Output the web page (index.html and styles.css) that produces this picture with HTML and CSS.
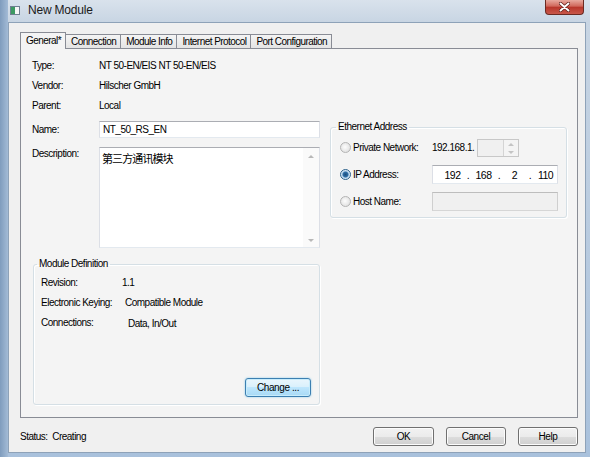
FILE: index.html
```html
<!DOCTYPE html>
<html lang="en">
<head>
    <meta charset="UTF-8">
    <title>New Module</title>
    <link rel="stylesheet" href="styles.css">
</head>
<body>
    <div class="window">
        <div class="titlebar">
            <span class="app-icon"></span>
            <span class="title">New Module</span>
            <button class="close-btn" aria-label="Close">
                <svg width="11" height="10" viewBox="0 0 11 10">
                    <path d="M1.5 1.5 L9.5 8.5 M9.5 1.5 L1.5 8.5" stroke="#5a1a14" stroke-width="3.4" stroke-linecap="round"/>
                    <path d="M1.5 1.5 L9.5 8.5 M9.5 1.5 L1.5 8.5" stroke="#fff" stroke-width="2" stroke-linecap="round"/>
                </svg>
            </button>
        </div>

        <div class="client">
            <div class="tabs">
                <div class="tab active">General*</div>
                <div class="tab">Connection</div>
                <div class="tab">Module Info</div>
                <div class="tab">Internet Protocol</div>
                <div class="tab">Port Configuration</div>
            </div>

            <div class="panel">
                <div class="panel-top">
                    <div class="left-col">
                        <div class="info-row"><span>Type:</span><span>NT 50-EN/EIS NT 50-EN/EIS</span></div>
                        <div class="info-row"><span>Vendor:</span><span>Hilscher GmbH</span></div>
                        <div class="info-row"><span>Parent:</span><span>Local</span></div>

                        <div class="info-row name-row">
                            <label>Name:</label>
                            <div class="textbox">NT_50_RS_EN</div>
                        </div>

                        <div class="info-row desc-row">
                            <label>Description:</label>
                            <div class="textarea">
                                <div class="ta-text">第三方通讯模块</div>
                                <div class="scrollbar">
                                    <span class="arrow up"></span>
                                    <span class="arrow down"></span>
                                </div>
                            </div>
                        </div>
                    </div>

                    <fieldset class="group eth-group">
                        <legend>Ethernet Address</legend>
                        <div class="eth-row">
                            <span class="radio-wrap"><span class="radio"></span>Private Network:</span>
                            <div class="private-net">
                                <span>192.168.1.</span>
                                <div class="spinbox">
                                    <div class="spin-field"></div>
                                    <div class="spin-btns">
                                        <span class="arrow up"></span>
                                        <span class="arrow down"></span>
                                    </div>
                                </div>
                            </div>
                        </div>
                        <div class="eth-row">
                            <span class="radio-wrap"><span class="radio on"></span>IP Address:</span>
                            <div class="ipbox">
                                <span>192</span><span>.</span><span>168</span><span>.</span><span>2</span><span>.</span><span>110</span>
                            </div>
                        </div>
                        <div class="eth-row">
                            <span class="radio-wrap"><span class="radio"></span>Host Name:</span>
                            <div class="textbox disabled"></div>
                        </div>
                    </fieldset>
                </div>

                <fieldset class="group moddef">
                    <legend>Module Definition</legend>
                    <div class="def-row"><span>Revision:</span><span>1.1</span></div>
                    <div class="def-row"><span>Electronic Keying:</span><span class="keying">Compatible Module</span></div>
                    <div class="def-row"><span>Connections:</span><span class="conn">Data, In/Out</span></div>
                    <button class="btn default">Change ...</button>
                </fieldset>
            </div>

            <div class="statusbar">
                <span class="status">Status:&nbsp; Creating</span>
                <button class="btn ok">OK</button>
                <button class="btn">Cancel</button>
                <button class="btn">Help</button>
            </div>
        </div>
    </div>
</body>
</html>
```

FILE: styles.css
```css
* {
    margin: 0;
    padding: 0;
    box-sizing: border-box;
}

body {
    width: 590px;
    height: 457px;
    overflow: hidden;
    font-family: 'Liberation Sans', 'Noto Sans CJK SC', sans-serif;
    font-size: 10px;
    letter-spacing: -0.5px;
    color: #000;
}

.window {
    height: 457px;
    display: flex;
    flex-direction: column;
    background:
        linear-gradient(to right, #7f9cbd 0, #a3bbd6 8px, transparent 8px),
        linear-gradient(#d9e2ec 0, #c8d5e3 22px, #a9c1dc 100%);
}

/* barra de titulo */
.titlebar {
    height: 22px;
    display: flex;
    align-items: flex-start;
}

.app-icon {
    width: 10px;
    height: 9px;
    margin: 6px 0 0 10px;
    border: 1px solid #6f7f90;
    background: linear-gradient(to right, #3d9a62 0, #3d9a62 4px, #f7f7f7 4px);
}

.title {
    margin: 3px 0 0 8px;
    font-size: 12px;
    letter-spacing: -0.2px;
    line-height: 15px;
    color: #1a1a1a;
}

.close-btn {
    margin-left: auto;
    margin-right: 6px;
    width: 39px;
    height: 15px;
    border: 1px solid #6b2a22;
    border-top: none;
    border-radius: 0 0 4px 4px;
    background: linear-gradient(#e8a99e 0, #d0675a 45%, #b8352a 50%, #c8584a 100%);
    display: flex;
    align-items: center;
    justify-content: center;
}

/* area cliente */
.client {
    flex: 1;
    margin: 0 4px 4px 8px;
    border: 1px solid #8ea2b8;
    background: #f0f0f0;
    padding: 9px 7px 0 11px;
    display: flex;
    flex-direction: column;
}

.tabs {
    display: flex;
    align-items: flex-end;
    height: 16px;
}

.tab {
    height: 14px;
    line-height: 13px;
    padding: 0 4px 0 5px;
    margin-right: -1px;
    border: 1px solid #898c95;
    border-bottom: none;
    background: linear-gradient(#f4f4f4, #e4e4e4);
    letter-spacing: -0.55px;
}

.tab.active {
    height: 17px;
    line-height: 15px;
    padding: 0 4px 0 5px;
    margin-bottom: -1px;
    background: #f4f4f4;
    position: relative;
    z-index: 1;
}

.panel {
    height: 370px;
    flex: none;
    border: 1px solid #898c95;
    background: #f4f4f4;
    padding: 6px 0 0 11px;
}

.panel-top {
    display: flex;
    align-items: flex-start;
}

.left-col {
    width: 288px;
}

.info-row {
    display: grid;
    grid-template-columns: 67px 1fr;
    align-items: center;
    height: 20px;
}

.name-row {
    margin-top: 6px;
    height: 17px;
}

.desc-row {
    margin-top: 9px;
    height: 101px;
    align-items: start;
}

.desc-row label {
    padding-top: 1px;
}

.textbox {
    height: 17px;
    line-height: 15px;
    padding-left: 3px;
    background: #fff;
    border: 1px solid;
    border-color: #abadb3 #dcdfe6 #e3e9ef #dcdfe6;
}

.textbox.disabled {
    background: #f0f0f0;
    border-color: #bdbdbd #cfcfcf #d6d6d6 #cfcfcf;
}

.textarea {
    height: 101px;
    display: flex;
    background: #fff;
    border: 1px solid;
    border-color: #abadb3 #dcdfe6 #e3e9ef #dcdfe6;
}

.ta-text {
    flex: 1;
    padding: 2px 0 0 2px;
    font-size: 11px;
    letter-spacing: -0.9px;
}

.scrollbar {
    width: 16px;
    display: flex;
    flex-direction: column;
    justify-content: space-between;
    align-items: center;
    padding: 7px 0 5px;
    background: #fafafa;
}

.arrow {
    width: 0;
    height: 0;
    border-left: 3px solid transparent;
    border-right: 3px solid transparent;
}

.arrow.up {
    border-bottom: 3px solid #b8b8b8;
}

.arrow.down {
    border-top: 3px solid #b8b8b8;
}

/* caixas de grupo */
.group {
    border: 1px solid #d5dfe5;
    border-radius: 3px;
    box-shadow: inset 1px 1px 0 #fff, 1px 1px 0 #fff;
}

.group legend {
    padding: 0 2px;
    margin-left: -4px;
    line-height: 12px;
}

.eth-group {
    width: 237px;
    margin: 66px 0 0 10px;
    padding: 5px 8px 6px 9px;
    display: flex;
    flex-direction: column;
    gap: 8px;
}

.eth-row {
    display: grid;
    grid-template-columns: 92px 1fr;
    align-items: center;
    height: 19px;
}

.radio-wrap {
    display: flex;
    align-items: center;
    gap: 2px;
}

.radio {
    width: 11px;
    height: 11px;
    border-radius: 50%;
    border: 1px solid #b4b4b4;
    background: radial-gradient(circle at 45% 45%, #fdfdfd 0, #e0e0e0 80%);
}

.radio.on {
    border-color: #2c628b;
    background: radial-gradient(circle, #1b4d7c 0, #2f6fa6 2.5px, #b9d6ef 3.5px, #eef5fb 5px);
}

.private-net {
    display: flex;
    align-items: center;
    gap: 1px;
}

.spinbox {
    display: flex;
    height: 18px;
    width: 42px;
    margin-left: 2px;
    border: 1px solid #c8c8c8;
}

.spin-field {
    flex: 1;
    background: #f0f0f0;
}

.spin-btns {
    width: 15px;
    display: flex;
    flex-direction: column;
    border-left: 1px solid #d4d4d4;
}

.spin-btns .arrow {
    margin: 3px auto 0;
}

.spin-btns .arrow.up {
    border-bottom-color: #c4c4c4;
}

.spin-btns .arrow.down {
    margin-top: 5px;
    border-top-color: #c4c4c4;
}

.ipbox {
    height: 19px;
    display: grid;
    grid-template-columns: 1fr 8px 1fr 8px 1fr 8px 1fr;
    align-items: center;
    text-align: center;
    padding-left: 8px;
    background: #fff;
    border: 1px solid;
    border-color: #abadb3 #dcdfe6 #e3e9ef #dcdfe6;
    font-size: 10.5px;
}

.eth-row .textbox.disabled {
    height: 19px;
}

.moddef {
    width: 287px;
    height: 147px;
    margin: 10px 0 0 1px;
    padding: 2px 8px 7px 7px;
    display: flex;
    flex-direction: column;
}

.def-row {
    display: grid;
    grid-template-columns: 81px 1fr;
    align-items: center;
    height: 20px;
}

.keying {
    padding-left: 3px;
}

.conn {
    padding: 3px 0 0 6px;
}

/* botoes */
.btn {
    font-family: inherit;
    font-size: 10px;
    letter-spacing: -0.4px;
    color: #000;
    width: 60px;
    height: 19px;
    border: 1px solid #707070;
    border-radius: 3px;
    background: linear-gradient(#f2f2f2 0, #ebebeb 50%, #dddddd 50%, #cfcfcf 100%);
    box-shadow: inset 0 0 0 1px #fcfcfc;
}

.btn.default {
    width: 66px;
    margin-top: auto;
    align-self: flex-end;
    border-color: #3c7fb1;
    background: linear-gradient(#eaf6fd 0, #d9f0fc 50%, #bee6fd 50%, #a7d9f5 100%);
    box-shadow: inset 0 0 0 1px #c8ecfb, 0 0 2px #7ec4e8;
}

.statusbar {
    flex: 1;
    display: flex;
    align-items: center;
    gap: 12px;
    padding: 2px 0 0 0;
}

.btn.ok {
    margin-left: auto;
    width: 61px;
}
```
